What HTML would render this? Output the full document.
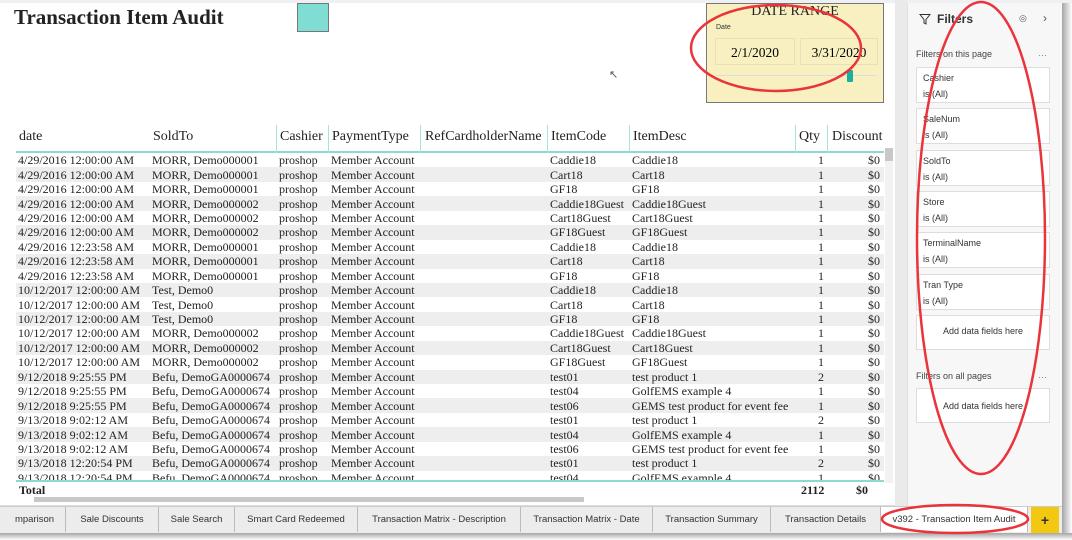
<!DOCTYPE html>
<html><head><meta charset="utf-8"><style>
*{box-sizing:border-box;margin:0;padding:0}
body{width:1072px;height:540px;background:#fff;position:relative;overflow:hidden;font-family:"Liberation Serif",serif}
.a{position:absolute}
.s{font-family:"Liberation Sans",sans-serif}
table{border-collapse:collapse;table-layout:fixed;position:absolute;left:16px;top:153px;width:868px;font-size:12px;color:#222}
td{height:14.45px;line-height:14px;white-space:nowrap;overflow:hidden;padding:0 2px}
tr:nth-child(even) td{background:#eeeeee}
td.n{text-align:right;padding-right:4px}
.card{position:absolute;left:916px;width:134px;height:36px;border:1px solid #ddd;background:#fff;font-family:"Liberation Sans",sans-serif;font-size:9px;color:#333;padding:2px 6px;line-height:16px}
.tab{position:absolute;top:507px;height:25px;font-family:"Liberation Sans",sans-serif;font-size:9.5px;color:#333;text-align:center;line-height:25px;border-right:1px solid #bbb}
</style></head><body>
<div class="a" style="left:0;top:0;width:1072px;height:3px;background:#eef0f4"></div>
<div class="a" style="left:14px;top:5px;font-size:21px;font-weight:bold;color:#222">Transaction Item Audit</div>
<div class="a" style="left:297px;top:3px;width:32px;height:29px;background:#7fddd4;border:1px solid #777"></div>
<div class="a" style="left:706px;top:3px;width:178px;height:100px;background:#f8f0c0;border:1px solid #777"></div>
<div class="a" style="left:706px;top:4px;width:178px;text-align:center;font-size:14px;color:#222">DATE RANGE</div>
<div class="a s" style="left:716px;top:24px;font-size:7px;color:#333">Date</div>
<div class="a" style="left:715px;top:38px;width:80px;height:27px;border:1px solid #e8e0b8;font-size:13.5px;line-height:27px;text-align:center">2/1/2020</div>
<div class="a" style="left:800px;top:38px;width:78px;height:27px;border:1px solid #e8e0b8;font-size:13.5px;line-height:27px;text-align:center">3/31/2020</div>
<div class="a" style="left:716px;top:75px;width:160px;height:1px;background:#ddd"></div>
<div class="a" style="left:847px;top:70px;width:6px;height:12px;background:#1aaf9f;border-radius:1px"></div>
<div class="a" style="left:609px;top:68px;font-size:11px;color:#555">↖</div>

<div class="a" style="left:16px;top:125px;width:868px;height:28px;font-size:14px;color:#222;border-bottom:2px solid #8cd9d0">
<span class="a" style="left:3px;top:4px">date</span>
<span class="a" style="left:137px;top:4px">SoldTo</span>
<span class="a" style="left:264px;top:4px">Cashier</span>
<span class="a" style="left:316px;top:4px">PaymentType</span>
<span class="a" style="left:409px;top:4px">RefCardholderName</span>
<span class="a" style="left:535px;top:4px">ItemCode</span>
<span class="a" style="left:617px;top:4px">ItemDesc</span>
<span class="a" style="left:783px;top:4px">Qty</span>
<span class="a" style="left:816px;top:4px">Discount</span>
</div>
<div class="a" style="left:276px;top:125px;width:1px;height:28px;background:#a8e4dd"></div>
<div class="a" style="left:328px;top:125px;width:1px;height:28px;background:#a8e4dd"></div>
<div class="a" style="left:420px;top:125px;width:1px;height:28px;background:#a8e4dd"></div>
<div class="a" style="left:547px;top:125px;width:1px;height:28px;background:#a8e4dd"></div>
<div class="a" style="left:629px;top:125px;width:1px;height:28px;background:#a8e4dd"></div>
<div class="a" style="left:795px;top:125px;width:1px;height:28px;background:#a8e4dd"></div>
<div class="a" style="left:827px;top:125px;width:1px;height:28px;background:#a8e4dd"></div>
<div class="a" style="left:885px;top:148px;width:8px;height:335px;background:#f2f2f2"></div>
<div class="a" style="left:885px;top:148px;width:8px;height:13px;background:#c8c8c8"></div>

<table>
<colgroup><col style="width:134px"><col style="width:127px"><col style="width:52px"><col style="width:92px"><col style="width:127px"><col style="width:82px"><col style="width:166px"><col style="width:32px"><col style="width:56px"></colgroup>
<tr><td>4/29/2016 12:00:00 AM</td><td>MORR, Demo000001</td><td>proshop</td><td>Member Account</td><td></td><td>Caddie18</td><td>Caddie18</td><td class="n">1</td><td class="n">$0</td></tr>
<tr><td>4/29/2016 12:00:00 AM</td><td>MORR, Demo000001</td><td>proshop</td><td>Member Account</td><td></td><td>Cart18</td><td>Cart18</td><td class="n">1</td><td class="n">$0</td></tr>
<tr><td>4/29/2016 12:00:00 AM</td><td>MORR, Demo000001</td><td>proshop</td><td>Member Account</td><td></td><td>GF18</td><td>GF18</td><td class="n">1</td><td class="n">$0</td></tr>
<tr><td>4/29/2016 12:00:00 AM</td><td>MORR, Demo000002</td><td>proshop</td><td>Member Account</td><td></td><td>Caddie18Guest</td><td>Caddie18Guest</td><td class="n">1</td><td class="n">$0</td></tr>
<tr><td>4/29/2016 12:00:00 AM</td><td>MORR, Demo000002</td><td>proshop</td><td>Member Account</td><td></td><td>Cart18Guest</td><td>Cart18Guest</td><td class="n">1</td><td class="n">$0</td></tr>
<tr><td>4/29/2016 12:00:00 AM</td><td>MORR, Demo000002</td><td>proshop</td><td>Member Account</td><td></td><td>GF18Guest</td><td>GF18Guest</td><td class="n">1</td><td class="n">$0</td></tr>
<tr><td>4/29/2016 12:23:58 AM</td><td>MORR, Demo000001</td><td>proshop</td><td>Member Account</td><td></td><td>Caddie18</td><td>Caddie18</td><td class="n">1</td><td class="n">$0</td></tr>
<tr><td>4/29/2016 12:23:58 AM</td><td>MORR, Demo000001</td><td>proshop</td><td>Member Account</td><td></td><td>Cart18</td><td>Cart18</td><td class="n">1</td><td class="n">$0</td></tr>
<tr><td>4/29/2016 12:23:58 AM</td><td>MORR, Demo000001</td><td>proshop</td><td>Member Account</td><td></td><td>GF18</td><td>GF18</td><td class="n">1</td><td class="n">$0</td></tr>
<tr><td>10/12/2017 12:00:00 AM</td><td>Test, Demo0</td><td>proshop</td><td>Member Account</td><td></td><td>Caddie18</td><td>Caddie18</td><td class="n">1</td><td class="n">$0</td></tr>
<tr><td>10/12/2017 12:00:00 AM</td><td>Test, Demo0</td><td>proshop</td><td>Member Account</td><td></td><td>Cart18</td><td>Cart18</td><td class="n">1</td><td class="n">$0</td></tr>
<tr><td>10/12/2017 12:00:00 AM</td><td>Test, Demo0</td><td>proshop</td><td>Member Account</td><td></td><td>GF18</td><td>GF18</td><td class="n">1</td><td class="n">$0</td></tr>
<tr><td>10/12/2017 12:00:00 AM</td><td>MORR, Demo000002</td><td>proshop</td><td>Member Account</td><td></td><td>Caddie18Guest</td><td>Caddie18Guest</td><td class="n">1</td><td class="n">$0</td></tr>
<tr><td>10/12/2017 12:00:00 AM</td><td>MORR, Demo000002</td><td>proshop</td><td>Member Account</td><td></td><td>Cart18Guest</td><td>Cart18Guest</td><td class="n">1</td><td class="n">$0</td></tr>
<tr><td>10/12/2017 12:00:00 AM</td><td>MORR, Demo000002</td><td>proshop</td><td>Member Account</td><td></td><td>GF18Guest</td><td>GF18Guest</td><td class="n">1</td><td class="n">$0</td></tr>
<tr><td>9/12/2018 9:25:55 PM</td><td>Befu, DemoGA0000674</td><td>proshop</td><td>Member Account</td><td></td><td>test01</td><td>test product 1</td><td class="n">2</td><td class="n">$0</td></tr>
<tr><td>9/12/2018 9:25:55 PM</td><td>Befu, DemoGA0000674</td><td>proshop</td><td>Member Account</td><td></td><td>test04</td><td>GolfEMS example 4</td><td class="n">1</td><td class="n">$0</td></tr>
<tr><td>9/12/2018 9:25:55 PM</td><td>Befu, DemoGA0000674</td><td>proshop</td><td>Member Account</td><td></td><td>test06</td><td>GEMS test product for event fee</td><td class="n">1</td><td class="n">$0</td></tr>
<tr><td>9/13/2018 9:02:12 AM</td><td>Befu, DemoGA0000674</td><td>proshop</td><td>Member Account</td><td></td><td>test01</td><td>test product 1</td><td class="n">2</td><td class="n">$0</td></tr>
<tr><td>9/13/2018 9:02:12 AM</td><td>Befu, DemoGA0000674</td><td>proshop</td><td>Member Account</td><td></td><td>test04</td><td>GolfEMS example 4</td><td class="n">1</td><td class="n">$0</td></tr>
<tr><td>9/13/2018 9:02:12 AM</td><td>Befu, DemoGA0000674</td><td>proshop</td><td>Member Account</td><td></td><td>test06</td><td>GEMS test product for event fee</td><td class="n">1</td><td class="n">$0</td></tr>
<tr><td>9/13/2018 12:20:54 PM</td><td>Befu, DemoGA0000674</td><td>proshop</td><td>Member Account</td><td></td><td>test01</td><td>test product 1</td><td class="n">2</td><td class="n">$0</td></tr>
<tr><td style="height:8px">9/13/2018 12:20:54 PM</td><td>Befu, DemoGA0000674</td><td>proshop</td><td>Member Account</td><td></td><td>test04</td><td>GolfEMS example 4</td><td class="n">1</td><td class="n">$0</td></tr>
</table>
<div class="a" style="left:16px;top:480px;width:868px;height:16px;background:#fff;border-top:2px solid #8cd9d0;font-size:12px;font-weight:bold;color:#222">
<span class="a" style="left:3px;top:1px">Total</span>
<span class="a" style="left:785px;top:1px">2112</span>
<span class="a" style="left:840px;top:1px">$0</span>
</div>
<div class="a" style="left:34px;top:497px;width:550px;height:5px;background:#c8c8c8"></div>
<div class="a" style="left:0;top:505px;width:906px;height:1px;background:#ddd"></div>

<div class="a" style="left:895px;top:0;width:12px;height:506px;background:#eaeaea"></div>
<div class="a" style="left:907px;top:3px;width:155px;height:503px;background:#f7f7f7;border-left:1px solid #e0e0e0"></div>
<svg class="a" style="left:919px;top:13px" width="12" height="12" viewBox="0 0 12 12"><path d="M1 1.5h10L7 6.5V11L5 10V6.5Z" fill="none" stroke="#333" stroke-width="1"/></svg>
<div class="a s" style="left:937px;top:12px;font-size:12px;font-weight:bold;color:#333">Filters</div>
<div class="a s" style="left:1019px;top:13px;font-size:9px;color:#555">◎</div>
<div class="a s" style="left:1043px;top:11px;font-size:12px;color:#555">›</div>
<div class="a s" style="left:916px;top:49px;font-size:9px;color:#444">Filters on this page</div>
<div class="a s" style="left:1038px;top:48px;font-size:9px;color:#777">…</div>
<div class="card" style="top:67px">Cashier<br>is (All)</div>
<div class="card" style="top:108px">SaleNum<br>is (All)</div>
<div class="card" style="top:150px">SoldTo<br>is (All)</div>
<div class="card" style="top:191px">Store<br>is (All)</div>
<div class="card" style="top:232px">TerminalName<br>is (All)</div>
<div class="card" style="top:274px">Tran Type<br>is (All)</div>
<div class="card" style="top:315px;height:35px;text-align:center;line-height:30px;padding:0">Add data fields here</div>
<div class="a s" style="left:916px;top:371px;font-size:9px;color:#444">Filters on all pages</div>
<div class="a s" style="left:1038px;top:370px;font-size:9px;color:#777">…</div>
<div class="card" style="top:388px;height:35px;text-align:center;line-height:34px;padding:0">Add data fields here</div>

<div class="a" style="left:0;top:506px;width:1062px;height:27px;background:#ececec;border-top:1px solid #ccc"></div>
<div class="tab" style="left:4px;width:62px">mparison</div>
<div class="tab" style="left:66px;width:93px">Sale Discounts</div>
<div class="tab" style="left:159px;width:76px">Sale Search</div>
<div class="tab" style="left:235px;width:123px">Smart Card Redeemed</div>
<div class="tab" style="left:358px;width:163px">Transaction Matrix - Description</div>
<div class="tab" style="left:521px;width:132px">Transaction Matrix - Date</div>
<div class="tab" style="left:653px;width:118px">Transaction Summary</div>
<div class="tab" style="left:771px;width:110px">Transaction Details</div>
<div class="tab" style="left:881px;width:147px;background:#fff">v392 - Transaction Item Audit</div>
<div class="a" style="left:1031px;top:507px;width:28px;height:26px;background:#f2c811;text-align:center;font:bold 14px/26px 'Liberation Sans',sans-serif;color:#333">+</div>
<div class="a" style="left:1062px;top:3px;width:10px;height:537px;background:linear-gradient(90deg,#a5a5a5,#fff)"></div>
<div class="a" style="left:0;top:533px;width:1072px;height:7px;background:linear-gradient(#a5a5a5,#fff)"></div>

<svg class="a" style="left:0;top:0" width="1072" height="540">
<ellipse cx="776" cy="48" rx="85" ry="43" fill="none" stroke="#e8343a" stroke-width="2.5"/>
<ellipse cx="981" cy="238" rx="64" ry="236" fill="none" stroke="#e8343a" stroke-width="2.5"/>
<ellipse cx="955" cy="519" rx="73" ry="14" fill="none" stroke="#e8343a" stroke-width="2.5"/>
</svg>
</body></html>
